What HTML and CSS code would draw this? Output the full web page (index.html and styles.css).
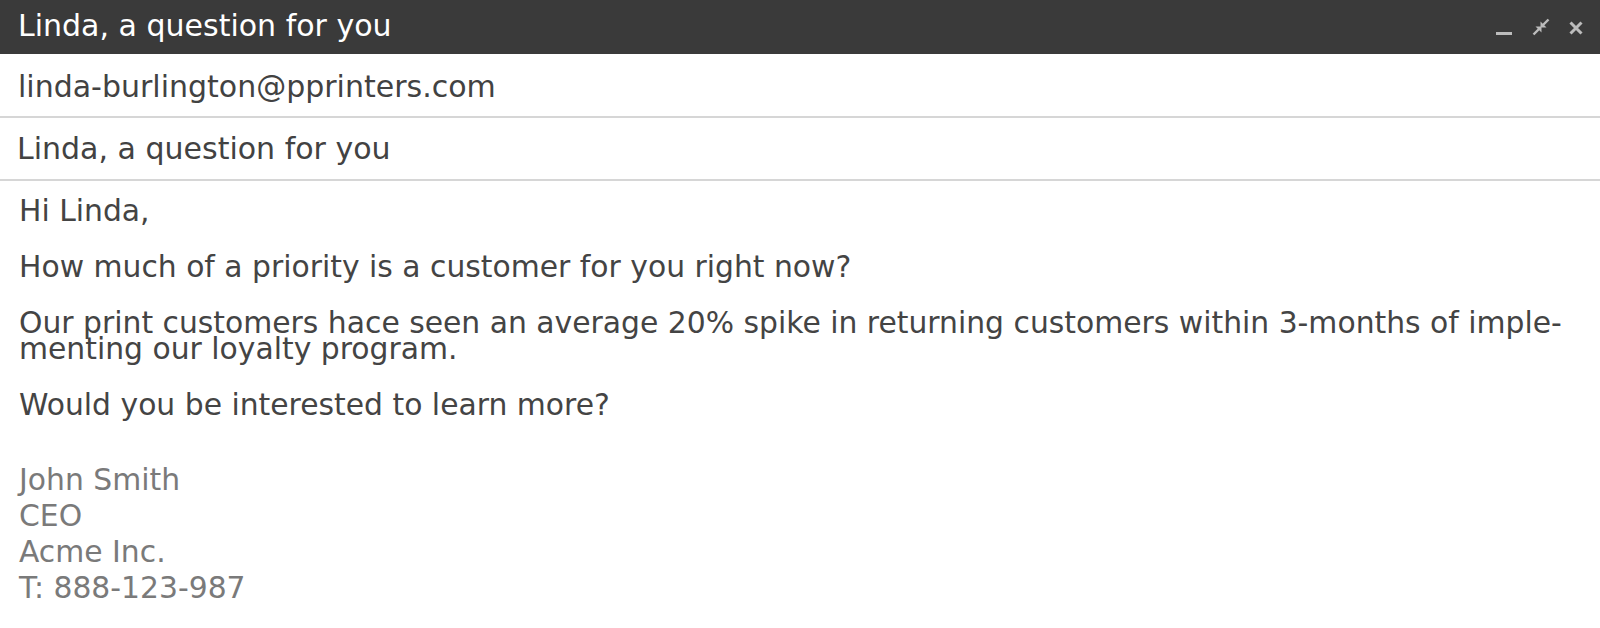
FILE: index.html
```html
<!DOCTYPE html>
<html lang="en">
<head>
    <meta charset="UTF-8">
    <title>Linda, a question for you</title>
    <link rel="stylesheet" href="styles.css">
</head>
<body>
<div class="compose">
    <div class="compose-head">
        <span class="compose-title">Linda, a question for you</span>
        <div class="head-tools">
            <svg class="tool tool-min" width="16" height="16" viewBox="0 0 16 16">
                <rect x="0" y="12" width="16" height="3" fill="#bcbcbc"/>
            </svg>
            <svg class="tool tool-shrink" width="18" height="18" viewBox="0 0 18 18">
                <!-- arrow from top right to center -->
                <path d="M16.5 1.5 L11 7" stroke="#bcbcbc" stroke-width="2.4"/>
                <path d="M8.5 3.5 L8.5 9.5 L14.5 9.5 Z" fill="#bcbcbc"/>
                <!-- arrow from bottom left to center -->
                <path d="M1.5 16.5 L7 11" stroke="#bcbcbc" stroke-width="2.4"/>
                <path d="M3.5 8.5 L9.5 8.5 L9.5 14.5 Z" fill="#bcbcbc"/>
            </svg>
            <svg class="tool tool-close" width="14" height="14" viewBox="0 0 14 14">
                <path d="M1.5 1.5 L12.5 12.5 M12.5 1.5 L1.5 12.5" stroke="#bcbcbc" stroke-width="3"/>
            </svg>
        </div>
    </div>
    <div class="field field-to">linda-burlington@pprinters.com</div>
    <div class="field field-subject">Linda, a question for you</div>
    <div class="message">
        <p>Hi Linda,</p>
        <p>How much of a priority is a customer for you right now?</p>
        <p>Our print customers hace seen an average 20% spike in returning customers within 3-months of imple-<br>menting our loyalty program.</p>
        <p>Would you be interested to learn more?</p>
        <div class="signature">
            John Smith<br>
            CEO<br>
            Acme Inc.<br>
            T: 888-123-987
        </div>
    </div>
</div>
</body>
</html>
```
FILE: styles.css
```css
html, body {
    margin: 0;
    padding: 0;
    background: #fff;
}
body {
    font-family: "DejaVu Sans", sans-serif;
    color: #444;
}
.compose {
    width: 1600px;
    height: 628px;
    overflow: hidden;
}
.compose-head {
    display: flex;
    justify-content: space-between;
    align-items: flex-start;
    height: 54px;
    background: #3a3a3a;
    padding: 0 0 0 18px;
    box-sizing: border-box;
}
.compose-title {
    color: #fff;
    font-size: 30px;
    line-height: 51px;
    white-space: nowrap;
}
.head-tools {
    display: flex;
    align-items: center;
    padding-top: 18px;
}
.tool {
    display: block;
}
.tool-min {
    margin-right: 20px;
    margin-top: 2px;
}
.tool-shrink {
    margin-right: 19px;
}
.tool-close {
    margin-right: 17px;
    margin-top: 1px;
}
.field {
    font-size: 30px;
    padding-left: 18px;
    white-space: nowrap;
    border-bottom: 2px solid #d6d6d6;
    color: #424242;
}
.field-to {
    line-height: 58px;
    padding-top: 4px;
}
.field-subject {
    line-height: 61px;
    padding-left: 17px;
}
.message {
    padding: 17px 0 0 19px;
    font-size: 29.8px;
}
.message p {
    margin: 0 0 30px;
    line-height: 26px;
    white-space: nowrap;
}
.signature {
    margin-top: 44px;
    line-height: 36px;
    color: #7a7a7a;
}
```
